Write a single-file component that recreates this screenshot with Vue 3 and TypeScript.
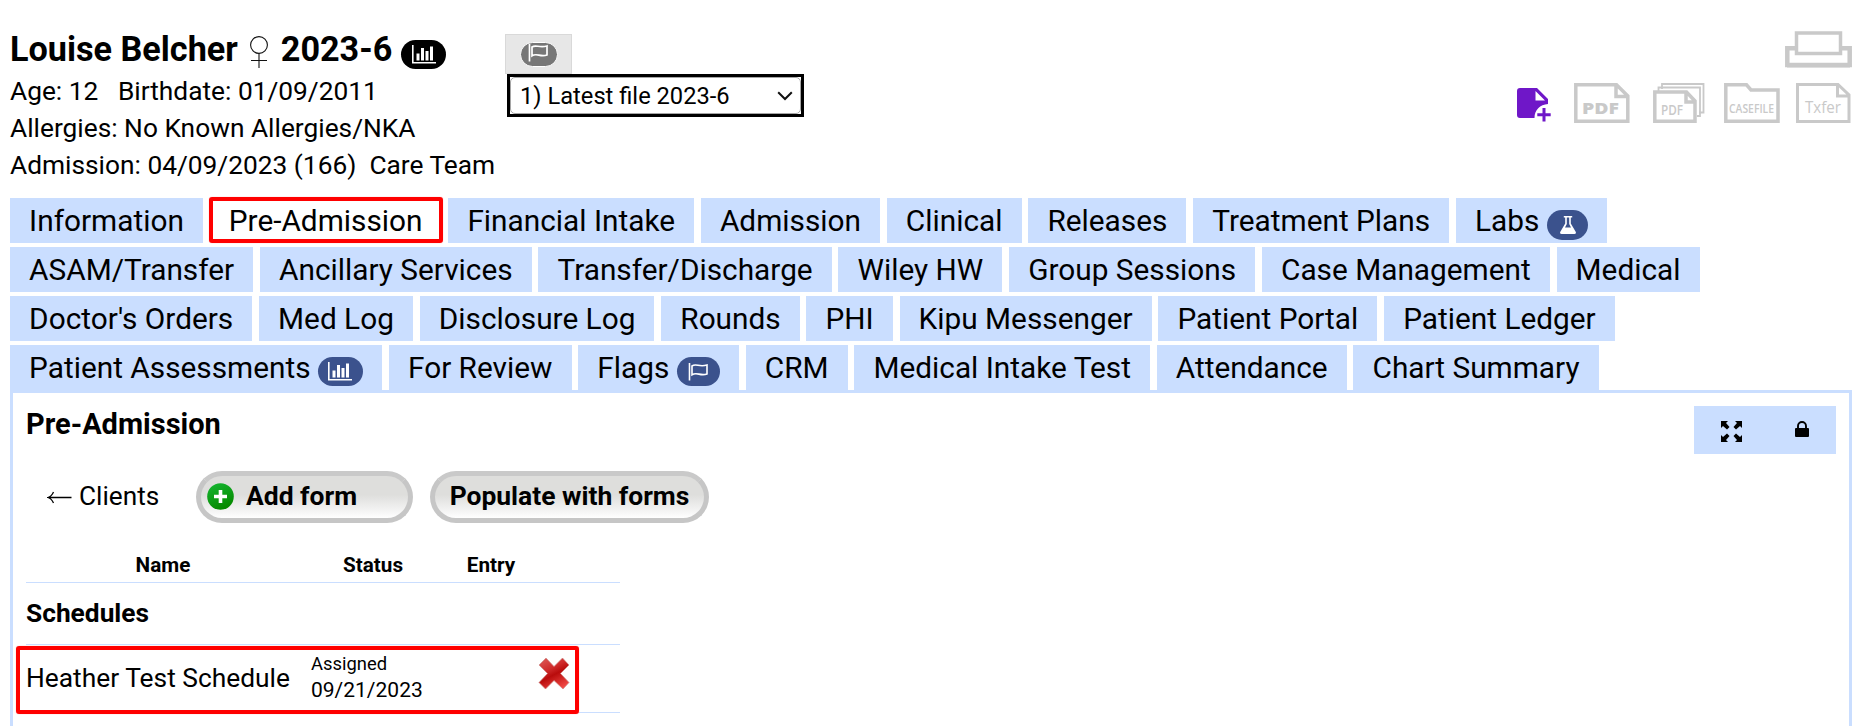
<script setup lang="ts">
type TabIcon = 'flask' | 'chart' | 'flag'
interface Tab {
  label: string
  icon?: TabIcon
  active?: boolean
}

const t = (label: string, icon?: TabIcon, active = false): Tab => ({ label, icon, active })

const tabRows: Tab[][] = [
  [t('Information'), t('Pre-Admission', undefined, true), t('Financial Intake'), t('Admission'), t('Clinical'), t('Releases'), t('Treatment Plans'), t('Labs', 'flask')],
  [t('ASAM/Transfer'), t('Ancillary Services'), t('Transfer/Discharge'), t('Wiley HW'), t('Group Sessions'), t('Case Management'), t('Medical')],
  [t("Doctor's Orders"), t('Med Log'), t('Disclosure Log'), t('Rounds'), t('PHI'), t('Kipu Messenger'), t('Patient Portal'), t('Patient Ledger')],
  [t('Patient Assessments', 'chart'), t('For Review'), t('Flags', 'flag'), t('CRM'), t('Medical Intake Test'), t('Attendance'), t('Chart Summary')],
]
</script>

<template>
  <div class="page">
    <header class="top">
      <section class="patient">
        <h1 class="name">
          <span class="who">Louise Belcher</span>
          <svg class="female" width="20" height="34" viewBox="0 0 20 34" fill="none" stroke="#111" stroke-width="1.1">
            <circle cx="10" cy="10" r="8.4" /><path d="M10 18.4V33M2 25.5H18" />
          </svg>
          <span class="year">2023-6</span>
          <span class="badge dark">
            <svg width="24" height="19" viewBox="0 0 24 19" fill="#fff"><path d="M0 0h1.6v17H24v1.6H0zM4.5 8.5h3V15.500h-3zM9 3h3v12.500H9zM13.500 6h3v9.500h-3zM18 1.500h3v14h-3z" /></svg>
          </span>
        </h1>
        <p>Age: 12&nbsp;&nbsp; Birthdate: 01/09/2011</p>
        <p>Allergies: No Known Allergies/NKA</p>
        <p>Admission: 04/09/2023 (166)&nbsp; Care Team</p>
      </section>

      <section class="files">
        <div class="flagbox">
          <span class="flagpill">
            <svg width="21" height="19" viewBox="0 0 21 19" fill="none" stroke="#fff" stroke-width="1.7"><path d="M1.500 1V18.500M4 4C8 1 11 5.500 19 3V12C12 14.500 9 9.500 4 12.800Z" /></svg>
          </span>
        </div>
        <div class="select">
          <div class="select-in">
            <span>1) Latest file 2023-6</span>
            <svg width="16" height="10" viewBox="0 0 16 10" fill="none" stroke="#111" stroke-width="2"><path d="M1.200 1.300 8 8 14.800 1.300" /></svg>
          </div>
        </div>
      </section>

      <section class="tools">
        <svg class="printer" width="67" height="37" viewBox="0 0 67 37" fill="none" stroke="#c9c9c9">
          <path stroke-width="4.500" d="M10 17.300H2.300V34H64.700V17.300H57" /><path stroke-width="4" d="M2 34.500H65" /><rect x="11.500" y="2" width="44" height="20.500" stroke-width="3.500" />
        </svg>
        <div class="doc-row">
          <svg class="add-file" width="35" height="35" viewBox="0 0 35 35">
            <path fill="#6f17c8" fill-rule="evenodd" d="M3 0H20L31 11V16C23 16.500 17.500 22 17.500 30H3Q0 30 0 27V3Q0 0 3 0ZM18.500 3V12.500H28Z" />
            <path d="M27 20V33.500M20.300 26.700H33.700" stroke="#6f17c8" stroke-width="3" />
          </svg>
          <svg class="doc" width="56" height="40" viewBox="0 0 56 40" fill="none" stroke="#c9c9c9" stroke-width="3.500">
            <path d="M1.800 1.800H42.500L53.800 13V38.200H1.800ZM42 1.800V13.500H54" />
            <text x="8" y="31" textLength="37" lengthAdjust="spacingAndGlyphs" class="t-bold">PDF</text>
          </svg>
          <svg class="doc multi" width="52" height="40" viewBox="0 0 52 40" fill="none" stroke="#c9c9c9">
            <path stroke-width="1.800" d="M9 6V1H50.500V29.500H46M5.500 9V4.500H47V33H44" />
            <path stroke-width="3.500" d="M1.800 9H33.500L42 18V38.200H1.800ZM33 9V19H43" />
            <text x="8" y="31.500" textLength="22" lengthAdjust="spacingAndGlyphs" class="t-mid">PDF</text>
          </svg>
          <svg class="doc case" width="56" height="40" viewBox="0 0 56 40" fill="none" stroke="#c9c9c9" stroke-width="3.500">
            <path d="M1.800 1.800H22.500L27 7H54V38.200H1.800Z" />
            <text x="5" y="30.300" textLength="45" lengthAdjust="spacingAndGlyphs" class="t-small">CASEFILE</text>
          </svg>
          <svg class="doc" width="56" height="40" viewBox="0 0 56 40" fill="none" stroke="#c9c9c9" stroke-width="3">
            <path d="M1.500 1.500H42L53 12V38.500H1.500ZM41.500 1.500V13H53" />
            <text x="9" y="30" textLength="36" lengthAdjust="spacingAndGlyphs" class="t-reg">Txfer</text>
          </svg>
        </div>
      </section>
    </header>

    <nav class="tabs">
      <div v-for="(row, i) in tabRows" :key="i" class="tab-row">
        <a v-for="tab in row" :key="tab.label" class="tab" :class="{ active: tab.active }">
          <span>{{ tab.label }}</span>
          <span v-if="tab.icon" class="badge" :class="tab.icon">
            <svg v-if="tab.icon === 'flask'" width="16" height="18" viewBox="0 0 16 18" fill="#fff"><path fill-rule="evenodd" d="M3.800 0h8.400v1.500h-1.400v6L15.800 16q.6 2-1.500 2H1.700q-2.100 0-1.500-2l5-8.500v-6H3.800zM6.800 1.500V8L5 11.500h6L9.200 8V1.500z" /></svg>
            <svg v-else-if="tab.icon === 'chart'" width="24" height="19" viewBox="0 0 24 19" fill="#fff"><path d="M0 0h1.600v17H24v1.600H0zM4.500 8.500h3v7h-3zM9 3h3v12.500H9zM13.500 6h3v9.500h-3zM18 1.500h3v14h-3z" /></svg>
            <svg v-else width="21" height="19" viewBox="0 0 21 19" fill="none" stroke="#fff" stroke-width="1.600"><path d="M1.500 1V18.500M4 4C8 1 11 5.500 19 3V12C12 14.500 9 9.500 4 12.800Z" /></svg>
          </span>
        </a>
      </div>
    </nav>

    <main class="panel">
      <div class="panel-head">
        <h2>Pre-Admission</h2>
        <div class="panel-tools">
          <svg width="21" height="21" viewBox="0 0 21 21"><path d="M0 0H7L5 2 8.500 6 6 8.500 2 5 0 7Z" /><path d="M21 0H14L16 2 12.500 6 15 8.500 19 5 21 7Z" /><path d="M0 21H7L5 19 8.500 15 6 12.500 2 16 0 14Z" /><path d="M21 21H14L16 19 12.500 15 15 12.500 19 16 21 14Z" /></svg>
          <svg class="lock" width="14" height="16" viewBox="0 0 14 16"><rect y="7" width="14" height="9" rx="1" /><path d="M3 8V5a4 4 0 0 1 8 0v3" fill="none" stroke="#000" stroke-width="1.900" /></svg>
        </div>
      </div>

      <div class="actions">
        <a class="back">
          <svg width="25" height="13" viewBox="0 0 25 13" fill="none" stroke="#000" stroke-width="1.300"><path d="M1 6.500H24.500M6.500 1Q4.500 5.500 1 6.500 4.500 7.500 6.500 12" /></svg>
          <span>Clients</span>
        </a>
        <button class="btn add">
          <svg width="27" height="27" viewBox="0 0 27 27">
            <defs><linearGradient id="green" x1="0" y1="0" x2="0.400" y2="1"><stop offset="0" stop-color="#16b834" /><stop offset="1" stop-color="#068a00" /></linearGradient></defs>
            <circle cx="13.500" cy="13.500" r="13.300" fill="url(#green)" /><path d="M13.500 7V20M7 13.500H20" stroke="#fff" stroke-width="3.600" />
          </svg>
          <span>Add form</span>
        </button>
        <button class="btn"><span>Populate with forms</span></button>
      </div>

      <div class="table">
        <div class="row head"><span>Name</span><span>Status</span><span>Entry</span></div>
        <div class="row group">Schedules</div>
        <div class="row item">
          <span class="item-name">Heather Test Schedule</span>
          <span class="item-status"><small>Assigned</small><span>09/21/2023</span></span>
          <svg class="remove" width="32" height="33" viewBox="0 0 32 33">
            <defs><linearGradient id="red" x1="0.200" y1="0" x2="0.700" y2="1"><stop offset="0" stop-color="#dc5552" /><stop offset="0.350" stop-color="#cf2b2b" /><stop offset="0.550" stop-color="#b90c0c" /><stop offset="1" stop-color="#f24a46" /></linearGradient></defs>
            <path fill="url(#red)" stroke="#ce8986" stroke-width="0.700" d="M8 1 16 9.500 24.500 1 31 8 22.500 16.500 31 25.500 25 32 16 23.500 7.500 32 1 25.500 9.500 16.500 1 8Z" />
          </svg>
          <i class="mark"></i>
        </div>
      </div>
    </main>
  </div>
</template>

<style>
body {
  margin: 0;
  overflow: hidden;
  background: #fff;
}
</style>

<style scoped>
.page {
  box-sizing: border-box;
  width: 1864px;
  height: 726px;
  overflow: hidden;
  padding: 0 12px 0 10px;
  display: flex;
  flex-direction: column;
  font-family: Roboto, "Liberation Sans", sans-serif;
  color: #000;
}
.top {
  display: flex;
  height: 198px;
  flex: none;
}
.patient {
  width: 495px;
  flex: none;
  white-space: nowrap;
}
.patient p {
  margin: 0;
  font-size: 26.300px;
  line-height: 37px;
}
.name {
  margin: 0;
  padding-top: 28px;
  height: 45px;
  display: flex;
  font-size: 34.200px;
  line-height: 42px;
}
.female {
  margin: 7px 12px 0 11px;
}
.badge {
  display: flex;
  align-items: center;
  justify-content: center;
  box-sizing: border-box;
  height: 29px;
  border-radius: 15px;
  background: #3b528d;
}
.badge.dark {
  width: 45px;
  margin: 12px 0 0 9px;
  background: #000;
}
.files {
  width: 300px;
  padding-top: 34px;
}
.flagbox {
  box-sizing: border-box;
  width: 67px;
  height: 40px;
  border: 1px solid #d9d9d9;
  background: #e7e7e7;
  display: flex;
  justify-content: center;
  align-items: center;
}
.flagpill {
  width: 36px;
  height: 23px;
  border: 1px solid #fff;
  border-radius: 13px;
  background: #777;
  display: flex;
  justify-content: center;
}
.select {
  box-sizing: border-box;
  width: 297px;
  height: 43px;
  margin-left: 2px;
  border: 3px solid #000;
}
.select-in {
  box-sizing: border-box;
  height: 37px;
  border: 1px solid #a5a5a5;
  border-radius: 5px;
  padding: 0 7px 0 9px;
  display: flex;
  align-items: center;
  justify-content: space-between;
  font-size: 23.700px;
  white-space: nowrap;
}
.tools {
  margin-left: auto;
  padding-top: 31px;
  display: flex;
  flex-direction: column;
  align-items: flex-end;
}
.doc-row {
  display: flex;
  margin-top: 15px;
}
.add-file {
  margin: 5px 22px 0 0;
}
.doc + .doc {
  margin-left: 16px;
}
.doc + .doc.multi {
  margin-left: 23px;
}
.doc + .doc.case {
  margin-left: 19px;
}
.doc text {
  fill: #c9c9c9;
  stroke: none;
  font-family: "Open Sans", sans-serif;
}
.t-bold {
  font-size: 16px;
  font-weight: 800;
}
.t-mid {
  font-size: 14px;
  font-weight: 600;
}
.t-small {
  font-size: 12px;
  font-weight: 600;
}
.t-reg {
  font-size: 17px;
}
.tabs {
  display: flex;
  flex-direction: column;
  gap: 4px;
  flex: none;
}
.tab-row {
  display: flex;
  gap: 6.700px;
}
.tab {
  position: relative;
  display: flex;
  height: 45px;
  padding: 0 19.100px;
  background: #cadeff;
  font-size: 29.800px;
  line-height: 45px;
  white-space: nowrap;
}
.tab.active {
  background: #fff;
}
.tab.active::after {
  content: "";
  position: absolute;
  inset: -1px -1px 0 -1px;
  border: 4px solid #f00;
  border-radius: 3px;
  box-shadow: 0 0 1px #f88;
}
.tab .badge {
  margin: 12px 0 0 8px;
}
.tab .badge.flask {
  width: 41px;
  height: 30px;
}
.tab .badge.chart {
  width: 45.500px;
  margin-left: 7px;
}
.tab .badge.flag {
  width: 43px;
  margin-left: 7.500px;
}
.panel {
  box-sizing: border-box;
  flex: none;
  height: 360px;
  border: 3px solid #cadeff;
  border-bottom: 0;
  padding: 13px 13px 0;
}
.panel-head {
  display: flex;
  justify-content: space-between;
  height: 48px;
}
h2 {
  margin: 0;
  font-size: 29px;
  line-height: 36px;
}
.panel-tools {
  box-sizing: border-box;
  width: 142px;
  height: 48px;
  padding: 15px 27px 0;
  background: #cadeff;
  display: flex;
  justify-content: space-between;
}
.actions {
  display: flex;
  margin-top: 17px;
  height: 52px;
}
.back {
  display: flex;
  align-items: center;
  box-sizing: border-box;
  width: 170px;
  padding: 0 0 2px 21px;
  gap: 7px;
  font-size: 26.200px;
  line-height: 50px;
  white-space: nowrap;
}
.back svg {
  margin-top: 3px;
}
.btn {
  box-sizing: border-box;
  width: 279px;
  height: 52px;
  margin: 0 0 0 17px;
  padding: 0 0 1px;
  border: 5px solid #c6c6c6;
  border-top-color: #c9c9c9;
  border-radius: 26px;
  background: linear-gradient(#dededc 45%, #f8f8f8 90%, #fff);
  display: flex;
  align-items: center;
  justify-content: center;
  font: bold 26.450px Roboto, sans-serif;
  color: #000;
  white-space: nowrap;
}
.btn span {
  padding-bottom: 2px;
}
.btn.add {
  width: 217px;
  margin: 0;
  padding-left: 6px;
  justify-content: flex-start;
  gap: 12px;
}
.table {
  width: 594px;
  margin-top: 25px;
}
.row {
  box-sizing: border-box;
  position: relative;
  border-bottom: 1px solid #cadeff;
}
.head {
  display: grid;
  grid-template-columns: 274px 146px 90px;
  height: 35px;
  font-size: 20.700px;
  font-weight: bold;
  line-height: 34px;
  text-align: center;
}
.group {
  height: 62px;
  font-size: 26.300px;
  font-weight: bold;
  line-height: 60px;
}
.item {
  display: flex;
  height: 68px;
  font-size: 26.350px;
}
.item-name {
  width: 285px;
  line-height: 67px;
  white-space: nowrap;
}
.item-status {
  width: 227px;
  display: flex;
  flex-direction: column;
  padding-top: 5px;
  font-size: 21px;
  line-height: 27px;
}
.item-status small {
  font-size: 18.400px;
  line-height: 27px;
}
.remove {
  margin-top: 12px;
}
.mark {
  position: absolute;
  left: -10px;
  top: 1px;
  box-sizing: border-box;
  width: 563px;
  height: 68px;
  border: 4px solid #f00;
  border-radius: 3px;
  box-shadow: 0 0 1px #f88;
}
</style>
